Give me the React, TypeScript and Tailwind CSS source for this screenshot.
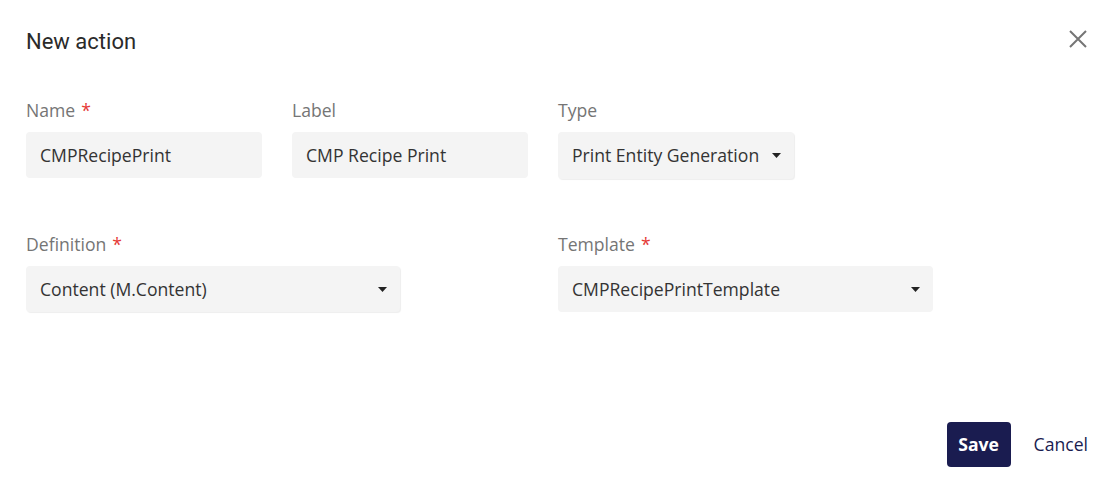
import type { ReactNode } from "react";

const labelCls = "text-[17.6px] leading-6 text-[#757575]";
const fieldCls =
  "flex h-[46px] items-center rounded-[4px] bg-[#f4f4f4] pl-[14px] text-[17.6px] text-[#333333]";

function Label({ children, required }: { children: ReactNode; required?: boolean }) {
  return (
    <div className={labelCls}>
      {children}
      {required ? <span className="ml-[6px] text-[#e53935]">*</span> : null}
    </div>
  );
}

function Caret() {
  return (
    <svg width="9" height="5" viewBox="0 0 9 5" className="shrink-0">
      <path d="M0 0h9L4.5 5z" fill="#222" />
    </svg>
  );
}

function Select({ value, className }: { value: string; className: string }) {
  return (
    <div className={`${fieldCls} justify-between pr-[13px] ${className}`}>
      <span className="truncate">{value}</span>
      <Caret />
    </div>
  );
}

export default function App() {
  return (
    <div className="relative h-[481px] w-[1118px] bg-white font-['Open_Sans',sans-serif]">
      <div className="flex items-start justify-between pl-[26px] pr-[30px] pt-[28px]">
        <h2 className="font-['Roboto',sans-serif] text-[22px] leading-7 text-[#2a2a2a]">New action</h2>
        <button type="button" aria-label="Close" className="mt-[1px] text-[#757575]">
          <svg width="20" height="20" viewBox="0 0 20 20">
            <path d="M2 2L18 18M18 2L2 18" stroke="currentColor" strokeWidth="2" />
          </svg>
        </button>
      </div>

      <div className="mt-[42px] grid grid-cols-[236px_236px_236px] gap-x-[30px] pl-[26px]">
        <div>
          <Label required>Name</Label>
          <div className={`${fieldCls} mt-[10px] h-[45px]`}>CMPRecipePrint</div>
        </div>
        <div>
          <Label>Label</Label>
          <div className={`${fieldCls} mt-[10px] h-[45px]`}>CMP Recipe Print</div>
        </div>
        <div>
          <Label>Type</Label>
          <Select
            value="Print Entity Generation"
            className="mt-[10px] h-[47px] w-[236px] shadow-[1px_1px_1px_rgba(0,0,0,0.07)]"
          />
        </div>
      </div>

      <div className="mt-[53px] grid grid-cols-[374px_375px] gap-x-[158px] pl-[26px]">
        <div>
          <Label required>Definition</Label>
          <Select
            value="Content (M.Content)"
            className="mt-[10px] shadow-[1px_1px_1px_rgba(0,0,0,0.07)]"
          />
        </div>
        <div>
          <Label required>Template</Label>
          <Select value="CMPRecipePrintTemplate" className="mt-[10px]" />
        </div>
      </div>

      <div className="mt-[110px] flex items-center justify-end gap-[23px] pr-[30px]">
        <button
          type="button"
          className="h-[45px] w-[64px] rounded-[4px] bg-[#1a1c50] text-[17.6px] font-bold text-white"
        >
          Save
        </button>
        <button type="button" className="text-[17.6px] text-[#1a1c50]">
          Cancel
        </button>
      </div>
    </div>
  );
}
